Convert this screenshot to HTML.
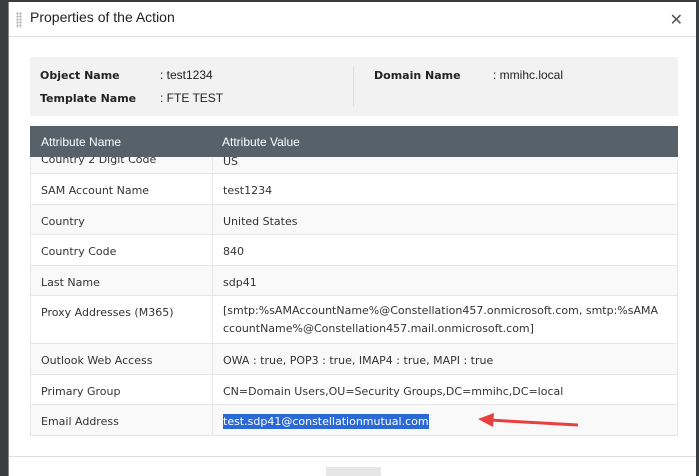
<!DOCTYPE html>
<html style="overflow:hidden;height:476px"><head><style>
*{box-sizing:border-box}
body{margin:0;width:699px;height:476px;overflow:hidden;background:#3a3d40;font-family:"DejaVu Sans","Liberation Sans",sans-serif;position:relative}
.dlg{position:absolute;left:8px;top:2px;width:688px;height:474px;background:#fff;border-left:1px solid #888;overflow:hidden}
.title{position:absolute;left:0;top:0;width:688px;height:35px;border-bottom:1px solid #ddd}
.title span{position:absolute;left:21px;top:7px;font-size:14px;color:#222;font-family:"Liberation Sans",sans-serif}
.grip{position:absolute;left:7px;top:10px;width:6px;height:16px;background:radial-gradient(circle,#aaa 1px,transparent 1.2px) 0 0/3px 3px}
.x{position:absolute;right:14px;top:8px;font-size:16px;color:#555}
.info{position:absolute;left:21px;top:55px;width:648px;height:59px;background:#f2f2f2;color:#222}
.info b{position:absolute;font-family:"DejaVu Sans",sans-serif;font-size:11px}
.info i{position:absolute;font-style:normal;font-family:"Liberation Sans",sans-serif;font-size:12px}
.sep{position:absolute;left:323px;top:10px;width:1px;height:40px;background:#ddd}
.tbl{position:absolute;left:21px;top:124px;width:648px}
.hd{height:31px;background:#566169;color:#fff;font-size:12px;font-family:"Liberation Sans",sans-serif;position:relative}
.hd span{position:absolute;top:9px}
.row{position:relative;border:1px solid #e6e6e6;border-top:none;font-size:11px;color:#333}
.row div{position:absolute;top:0;height:100%}
.row .a{left:10px;padding-top:10px}
.row .b{left:181px;border-left:1px solid #e6e6e6;padding-left:10px;padding-top:10px;line-height:14px}
.g{background:#f9f9f9}
.sel{background:#2b6ad6;color:#fff;padding:1px 0}
.foot{position:absolute;left:0;top:454px;width:688px;border-top:1px solid #ddd}
.btn{position:absolute;left:317px;top:465px;width:55px;height:20px;background:#e6e6e6}
</style></head><body>
<div class="dlg">
<div class="title"><div class="grip"></div><span>Properties of the Action</span><div class="x">✕</div></div>
<div class="info">
<b style="left:10px;top:12px">Object Name</b><i style="left:130px;top:11px">: test1234</i>
<b style="left:10px;top:35px">Template Name</b><i style="left:130px;top:34px">: FTE TEST</i>
<div class="sep"></div>
<b style="left:344px;top:12px">Domain Name</b><i style="left:463px;top:11px">: mmihc.local</i>
</div>
<div class="tbl">
<div class="hd"><span style="left:11px">Attribute Name</span><span style="left:192px">Attribute Value</span></div>
<div class="row g" style="height:17px;overflow:hidden"><div class="a" style="padding-top:0;margin-top:-4px">Country 2 Digit Code</div><div class="b" style="padding-top:0;margin-top:-2px">US</div></div>
<div class="row" style="height:31px"><div class="a">SAM Account Name</div><div class="b">test1234</div></div>
<div class="row g" style="height:30px"><div class="a">Country</div><div class="b">United States</div></div>
<div class="row" style="height:31px"><div class="a">Country Code</div><div class="b">840</div></div>
<div class="row g" style="height:30px"><div class="a">Last Name</div><div class="b">sdp41</div></div>
<div class="row" style="height:48px"><div class="a">Proxy Addresses (M365)</div><div class="b" style="line-height:18px;padding-top:6px">[smtp:%sAMAccountName%@Constellation457.onmicrosoft.com, smtp:%sAMA<br>ccountName%@Constellation457.mail.onmicrosoft.com]</div></div>
<div class="row g" style="height:31px"><div class="a">Outlook Web Access</div><div class="b">OWA : true, POP3 : true, IMAP4 : true, MAPI : true</div></div>
<div class="row" style="height:30px"><div class="a">Primary Group</div><div class="b">CN=Domain Users,OU=Security Groups,DC=mmihc,DC=local</div></div>
<div class="row g" style="height:31px"><div class="a">Email Address</div><div class="b" style="padding-left:0"><span style="margin-left:10px" class="sel">test.sdp41@constellationmutual.com</span></div></div>
</div>
<svg style="position:absolute;left:465px;top:408px" width="110" height="22"><line x1="104" y1="15" x2="15" y2="10" stroke="#e8403c" stroke-width="3"/><polygon points="4,9 20,3 19,17" fill="#e8403c"/></svg>
<div class="foot"></div>
<div class="btn"></div>
</div>
</body></html>
